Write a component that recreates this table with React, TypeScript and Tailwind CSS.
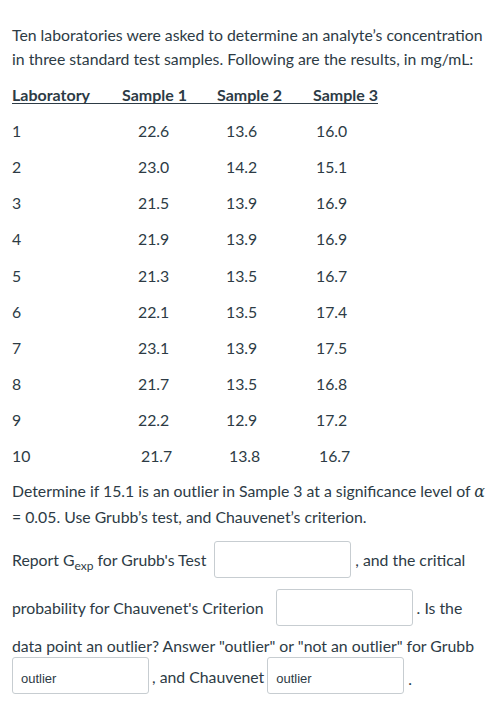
const rows = [
  ['1', '22.6', '13.6', '16.0'],
  ['2', '23.0', '14.2', '15.1'],
  ['3', '21.5', '13.9', '16.9'],
  ['4', '21.9', '13.9', '16.9'],
  ['5', '21.3', '13.5', '16.7'],
  ['6', '22.1', '13.5', '17.4'],
  ['7', '23.1', '13.9', '17.5'],
  ['8', '21.7', '13.5', '16.8'],
  ['9', '22.2', '12.9', '17.2'],
]

function Box({ value = '' }: { value?: string }) {
  return (
    <div className="w-[137px] h-[37px] shrink-0 rounded-[3px] border border-[#c7cdd1] bg-white pl-2 pt-[14px] text-[13px] leading-none text-[#2d3b45] font-['Liberation_Sans',Arial,sans-serif]">
      {value}
    </div>
  )
}

export default function App() {
  return (
    <div className="w-[489px] min-h-[723px] bg-white pl-3 pr-1 pt-[23px] text-[15.8px] text-[#2d3b45] font-['Lato',sans-serif]">
      <p className="leading-6">
        Ten laboratories were asked to determine an analyte’s concentration in three standard test samples. Following are the results, in mg/mL:
      </p>

      {/* header row, one continuous underline */}
      <div className="mt-[16px] inline-flex border-b border-[#2d3b45] font-bold leading-4 text-[16px]">
        <span className="w-[110px]">Laboratory</span>
        <span className="w-[95px]">Sample 1</span>
        <span className="w-[96px]">Sample 2</span>
        <span>Sample 3</span>
      </div>

      <div className="mt-[6px]">
        {rows.map((r) => (
          <div key={r[0]} className="flex h-[36.2px] items-center leading-6">
            <span className="w-[126px]">{r[0]}</span>
            <span className="w-[88px]">{r[1]}</span>
            <span className="w-[90px]">{r[2]}</span>
            <span>{r[3]}</span>
          </div>
        ))}
        <div className="flex h-[36px] items-center leading-6">
          <span className="w-[129px]">10</span>
          <span className="w-[88px]">21.7</span>
          <span className="w-[90px]">13.8</span>
          <span>16.7</span>
        </div>
      </div>

      <p className="mt-[4px] leading-[25px]">
        Determine if 15.1 is an outlier in Sample 3 at a significance level of{' '}
        <span className="font-['DejaVu_Serif',serif] italic">α</span> = 0.05. Use Grubb’s test, and Chauvenet’s criterion.
      </p>

      <div className="mt-[12px]">
        <div className="flex items-end h-[37px]">
          <span className="mb-[7px] mr-[8px]">
            Report G<span className="text-[12px] relative top-[4px]">exp</span> for Grubb's Test
          </span>
          <Box />
          <span className="mb-[7px] ml-[4px]">, and the critical</span>
        </div>
        <div className="flex items-end h-[37px] mt-[11px]">
          <span className="mb-[7px] mr-[12px]">probability for Chauvenet's Criterion</span>
          <Box />
          <span className="mb-[7px] ml-[4px]">. Is the</span>
        </div>
        <div className="leading-6 mt-[8px] whitespace-nowrap">
          data point an outlier? Answer "outlier" or "not an outlier" for Grubb
        </div>
        <div className="flex items-end h-[37px] mt-[-1px]">
          <Box value="outlier" />
          <span className="mb-[6px] mx-[3px]">, and Chauvenet</span>
          <Box value="outlier" />
          <span className="mb-[4px] ml-[4px]">.</span>
        </div>
      </div>
    </div>
  )
}
